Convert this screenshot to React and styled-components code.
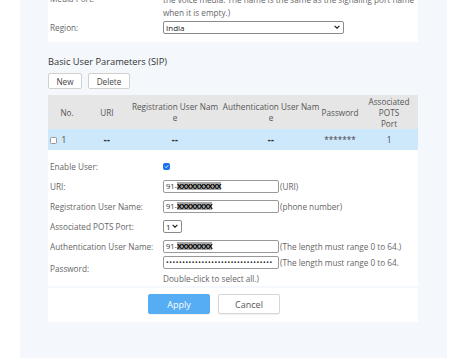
import styled, { createGlobalStyle } from 'styled-components';

const GlobalStyle = createGlobalStyle`
    html, body {
        margin: 0;
        background: #ffffff;
        overflow: hidden;
    }
    body {
        font-family: 'Open Sans', 'Noto Sans', sans-serif;
        color: #555;
    }
`;

const Panel = styled.div`
    width: 370px;
    margin: -7px 0 0 20px;
    padding: 0 29px 36px 28px;
    background: #f4f7fb;
`;

const Card = styled.div`
    background: #ffffff;
    padding: ${(p) => p.$pad || '0'};
    margin-top: ${(p) => p.$gap || '0'};
`;

const FieldRow = styled.div`
    display: grid;
    grid-template-columns: 115px 1fr;
    align-items: ${(p) => (p.$top ? 'start' : 'center')};
    min-height: ${(p) => p.$h || '20px'};
    font-size: 8.2px;
`;

const Label = styled.div`
    padding-left: 2px;
    color: #666;
    padding-top: ${(p) => p.$offset || '0'};
    white-space: nowrap;
`;

const Field = styled.div`
    display: flex;
    align-items: center;
    color: #666;
`;

const Note = styled.div`
    line-height: ${(p) => p.$lh || '13px'};
    margin-top: ${(p) => p.$mt || '0'};
    color: #666;
    white-space: nowrap;
`;

const Select = styled.div`
    box-sizing: border-box;
    display: flex;
    align-items: center;
    justify-content: space-between;
    width: ${(p) => p.$w};
    height: 13px;
    padding: 0 3px 0 2px;
    border: 1px solid #8a8a8a;
    border-radius: 2px;
    color: #222;
    font-size: 8px;
    background: #fff;
`;

const Input = styled.div`
    box-sizing: border-box;
    display: flex;
    align-items: center;
    width: 116px;
    height: 13px;
    padding: 0 2px;
    border: 1px solid #999;
    border-radius: 2px;
    color: #333;
    font-size: 7.5px;
    white-space: nowrap;
    overflow: hidden;
    flex-shrink: 0;
`;

const Masked = styled.span`
    color: #000;
    background: #a8a8a8;
    font-weight: 700;
    letter-spacing: -0.6px;
    font-size: 7.5px;
    line-height: 8px;
`;

const Dots = styled.span`
    font-size: 7px;
    letter-spacing: 0.6px;
    color: #222;
`;

const Hint = styled.span`
    margin-left: 1px;
    white-space: nowrap;
`;

const SectionTitle = styled.div`
    margin-top: 13px;
    font-size: 9.3px;
    line-height: 14px;
    color: #333;
`;

const Toolbar = styled.div`
    display: flex;
    gap: 6px;
    margin-top: 4px;
`;

const SmallButton = styled.button`
    box-sizing: border-box;
    height: 16px;
    width: ${(p) => p.$w};
    padding: 0;
    border: 1px solid #d0d0d0;
    border-radius: 2px;
    background: #fff;
    font-family: inherit;
    font-size: 8.2px;
    color: #444;
`;

const Table = styled.table`
    width: 370px;
    margin-top: 6px;
    border-collapse: collapse;
    table-layout: fixed;
    font-size: 8.2px;
`;

const Th = styled.th`
    height: 34px;
    padding: 0;
    background: #e6e6e6;
    font-weight: 400;
    color: #555;
    line-height: 11px;
    text-align: center;
    white-space: nowrap;
`;

const Td = styled.td`
    height: 21px;
    padding: 0;
    background: #cde7fb;
    color: #444;
    text-align: ${(p) => p.$align || 'center'};
`;

const Box = styled.span`
    display: inline-block;
    box-sizing: border-box;
    width: 7px;
    height: 7px;
    border: 1px solid ${(p) => (p.$checked ? '#1a73e8' : '#999')};
    border-radius: 1.5px;
    background: ${(p) => (p.$checked ? '#1a73e8' : '#fff')};
    vertical-align: middle;
    position: relative;
`;

const Tick = styled.svg`
    position: absolute;
    left: 0;
    top: 0;
`;

const Dash = styled.span`
    font-weight: 800;
    font-size: 9px;
    letter-spacing: 0.3px;
    color: #333;
`;

const Actions = styled.div`
    display: flex;
    gap: 8px;
    padding: 6px 0 8px 100px;
`;

const ActionButton = styled.button`
    box-sizing: border-box;
    width: 62px;
    height: 20px;
    border-radius: 2px;
    border: 1px solid ${(p) => (p.$primary ? '#56adf3' : '#d6d6d6')};
    background: ${(p) => (p.$primary ? '#56adf3' : '#fff')};
    color: ${(p) => (p.$primary ? '#fff' : '#555')};
    font-family: inherit;
    font-size: 9px;
    box-shadow: 0 1px 1px rgba(0, 0, 0, 0.06);
`;

function Checkbox({ checked }) {
    return (
        <Box $checked={checked}>
            {checked && (
                <Tick width="5" height="5" viewBox="0 0 10 10">
                    <path d="M2 5.2 L4.2 7.4 L8.2 2.8" stroke="#fff" strokeWidth="1.8" fill="none" />
                </Tick>
            )}
        </Box>
    );
}

function Chevron() {
    return (
        <svg width="6" height="4" viewBox="0 0 10 6">
            <path d="M1 1 L5 5 L9 1" stroke="#222" strokeWidth="2" fill="none" />
        </svg>
    );
}

function MaskedValue({ mask }) {
    return (
        <Input>
            91-<Masked>{mask}</Masked>
        </Input>
    );
}

export default function App() {
    return (
        <>
            <GlobalStyle />
            <Panel>
                <Card $pad="0 0 7px">
                    <FieldRow $h="26px" $top>
                        <Label>Media Port:</Label>
                        <Note>
                            the voice media. The name is the same as the signaling port name
                            <br />
                            when it is empty.)
                        </Note>
                    </FieldRow>
                    <FieldRow $h="16px">
                        <Label>Region:</Label>
                        <Field>
                            <Select $w="181px">
                                India <Chevron />
                            </Select>
                        </Field>
                    </FieldRow>
                </Card>

                <SectionTitle>Basic User Parameters (SIP)</SectionTitle>
                <Toolbar>
                    <SmallButton $w="34px">New</SmallButton>
                    <SmallButton $w="42px">Delete</SmallButton>
                </Toolbar>

                <Table>
                    <colgroup>
                        <col style={{ width: 38 }} />
                        <col style={{ width: 42 }} />
                        <col style={{ width: 94 }} />
                        <col style={{ width: 98 }} />
                        <col style={{ width: 40 }} />
                        <col style={{ width: 58 }} />
                    </colgroup>
                    <thead>
                        <tr>
                            <Th>No.</Th>
                            <Th>URI</Th>
                            <Th>
                                Registration User Nam
                                <br />e
                            </Th>
                            <Th>
                                Authentication User Nam
                                <br />e
                            </Th>
                            <Th>Password</Th>
                            <Th>
                                Associated
                                <br />
                                POTS
                                <br />
                                Port
                            </Th>
                        </tr>
                    </thead>
                    <tbody>
                        <tr>
                            <Td $align="left">
                                &nbsp;<Checkbox />&nbsp;&nbsp;1
                            </Td>
                            <Td><Dash>--</Dash></Td>
                            <Td><Dash>--</Dash></Td>
                            <Td><Dash>--</Dash></Td>
                            <Td>*******</Td>
                            <Td>1</Td>
                        </tr>
                    </tbody>
                </Table>

                <Card $pad="6px 0 0">
                    <FieldRow>
                        <Label>Enable User:</Label>
                        <Field>
                            <Checkbox checked />
                        </Field>
                    </FieldRow>
                    <FieldRow>
                        <Label>URI:</Label>
                        <Field>
                            <MaskedValue mask="XXXXXXXXXX" />
                            <Hint>(URI)</Hint>
                        </Field>
                    </FieldRow>
                    <FieldRow>
                        <Label>Registration User Name:</Label>
                        <Field>
                            <MaskedValue mask="XXXXXXXX" />
                            <Hint>(phone number)</Hint>
                        </Field>
                    </FieldRow>
                    <FieldRow>
                        <Label>Associated POTS Port:</Label>
                        <Field>
                            <Select $w="19px">
                                1 <Chevron />
                            </Select>
                        </Field>
                    </FieldRow>
                    <FieldRow>
                        <Label>Authentication User Name:</Label>
                        <Field>
                            <MaskedValue mask="XXXXXXXX" />
                            <Hint>(The length must range 0 to 64.)</Hint>
                        </Field>
                    </FieldRow>
                    <FieldRow $h="30px" $top>
                        <Label $offset="7px">Password:</Label>
                        <div>
                            <Field>
                                <Input>
                                    <Dots>•••••••••••••••••••••••••••••••••</Dots>
                                </Input>
                                <Hint>(The length must range 0 to 64.</Hint>
                            </Field>
                            <Note $lh="12px" $mt="4px">Double-click to select all.)</Note>
                        </div>
                    </FieldRow>
                </Card>

                <Card $gap="2px">
                    <Actions>
                        <ActionButton $primary>Apply</ActionButton>
                        <ActionButton>Cancel</ActionButton>
                    </Actions>
                </Card>
            </Panel>
        </>
    );
}
